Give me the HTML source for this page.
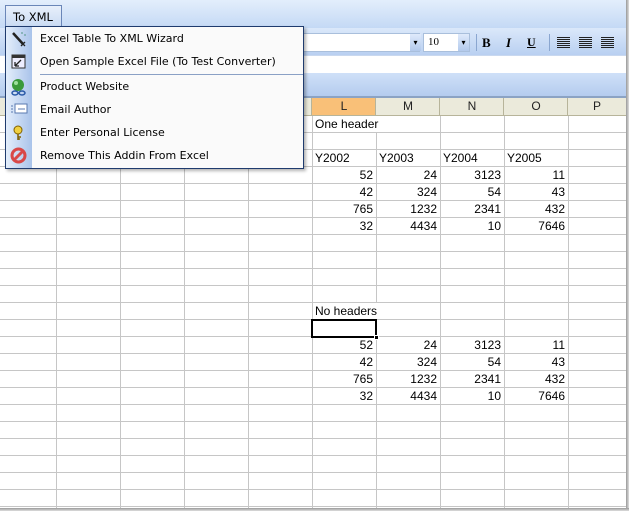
<!DOCTYPE html>
<html><head><style>
*{margin:0;padding:0;box-sizing:border-box}
body{width:634px;height:517px;position:relative;overflow:hidden;background:#fff;font-family:"Liberation Sans",Arial,sans-serif}
.a{position:absolute}
.grid{left:0;top:116px;width:626px;height:392px;
background:repeating-linear-gradient(to bottom,transparent 0 16px,#c6c6c6 16px 17px),repeating-linear-gradient(to right,transparent 0 63px,#c6c6c6 63px 64px);
background-position:0 0,-7px 0}
.t{position:absolute;font-size:12px;color:#000;line-height:17px;height:17px}
.r{text-align:right;width:60px}
.mi{position:absolute;left:40px;font-size:12px;color:#000;font-family:"DejaVu Sans","Liberation Sans",sans-serif;font-size:11px}
</style></head><body>
<!-- top band -->
<div class="a" style="left:0;top:0;width:628px;height:28px;background:linear-gradient(#e3eefc,#c4d9f5)"></div>
<div class="a" style="left:5px;top:5px;width:57px;height:22px;background:linear-gradient(#e8f0fb,#c9dbf3);border:1px solid #6a86b8;border-bottom:none;font-size:12px;padding:4px 0 0 7px;font-family:'DejaVu Sans',sans-serif;font-size:11.5px">To XML</div>
<!-- toolbar -->
<div class="a" style="left:0;top:28px;width:628px;height:27px;background:linear-gradient(#dbe8fa,#b9d0f1)"></div>
<div class="a" style="left:300px;top:33px;width:120px;height:19px;background:#fff;border:1px solid #a9bfdc"></div>
<div class="a" style="left:410px;top:34px;width:11px;height:17px;background:linear-gradient(#dfeafb,#b2c9ec);font-size:8px;text-align:center;line-height:17px">▾</div>
<div class="a" style="left:423px;top:33px;width:47px;height:19px;background:#fff;border:1px solid #a9bfdc;font-family:'Liberation Serif',serif;font-size:11px;padding:2px 4px">10</div>
<div class="a" style="left:458px;top:34px;width:11px;height:17px;background:linear-gradient(#dfeafb,#b2c9ec);font-size:8px;text-align:center;line-height:17px">▾</div>
<div class="a" style="left:476px;top:34px;width:1px;height:17px;background:#8aa6d0"></div>
<div class="a" style="left:482px;top:35px;font:bold 13px 'Liberation Serif',serif">B</div>
<div class="a" style="left:506px;top:35px;font:italic bold 13px 'Liberation Serif',serif">I</div>
<div class="a" style="left:527px;top:35px;font:bold 12px 'Liberation Serif',serif;text-decoration:underline">U</div>
<div class="a" style="left:549px;top:34px;width:1px;height:17px;background:#8aa6d0"></div>
<div class="a" style="left:557px;top:37px;width:13px;height:11px;background:repeating-linear-gradient(#222 0 1px,transparent 1px 2px)"></div>
<div class="a" style="left:579px;top:37px;width:13px;height:11px;background:repeating-linear-gradient(#222 0 1px,transparent 1px 2px)"></div>
<div class="a" style="left:601px;top:37px;width:13px;height:11px;background:repeating-linear-gradient(#222 0 1px,transparent 1px 2px)"></div>
<!-- formula bar -->
<div class="a" style="left:0;top:55px;width:628px;height:18px;background:#fff;border-top:1px solid #c9d8ef"></div>
<div class="a" style="left:0;top:73px;width:628px;height:24px;background:linear-gradient(#cfe0f8,#b3cbee)"></div>
<div class="a" style="left:0;top:96px;width:628px;height:2px;background:#8ba3c4"></div>
<!-- header row -->
<div class="a" style="left:0;top:98px;width:626px;height:18px;background:#ebeadb;border-bottom:1px solid #b7b49a"></div>
<div class="a" style="left:312px;top:98px;width:64px;height:18px;background:#f9c078;border-bottom:1px solid #b7b49a"></div>
<div class="t" style="top:98px;left:312px;width:64px;text-align:center;color:#222">L</div>
<div class="t" style="top:98px;left:376px;width:64px;text-align:center;color:#222">M</div>
<div class="t" style="top:98px;left:440px;width:64px;text-align:center;color:#222">N</div>
<div class="t" style="top:98px;left:504px;width:64px;text-align:center;color:#222">O</div>
<div class="t" style="top:98px;left:568px;width:58px;text-align:center;color:#222">P</div>
<div class="a" style="left:375px;top:98px;width:1px;height:18px;background:#b7b49a"></div>
<div class="a" style="left:439px;top:98px;width:1px;height:18px;background:#b7b49a"></div>
<div class="a" style="left:503px;top:98px;width:1px;height:18px;background:#b7b49a"></div>
<div class="a" style="left:567px;top:98px;width:1px;height:18px;background:#b7b49a"></div>
<div class="a" style="left:311px;top:98px;width:1px;height:18px;background:#b7b49a"></div>
<!-- grid -->
<div class="a grid"></div>
<div class="a" style="left:626px;top:0;width:3px;height:511px;background:linear-gradient(to right,#999,#ddd)"></div>
<div class="a" style="left:0;top:508px;width:629px;height:3px;background:linear-gradient(#999,#ddd)"></div>
<!-- white overlays for text cells spanning -->
<div class="a" style="left:313px;top:116px;width:126px;height:16px;background:#fff"></div>
<div class="a" style="left:313px;top:303px;width:126px;height:16px;background:#fff"></div>
<div class="t" style="left:315px;top:116px">One header</div>
<div class="t" style="left:315px;top:150px">Y2002</div>
<div class="t" style="left:379px;top:150px">Y2003</div>
<div class="t" style="left:443px;top:150px">Y2004</div>
<div class="t" style="left:507px;top:150px">Y2005</div>
<div class="t r" style="left:313px;top:167px">52</div><div class="t r" style="left:377px;top:167px">24</div><div class="t r" style="left:441px;top:167px">3123</div><div class="t r" style="left:505px;top:167px">11</div>
<div class="t r" style="left:313px;top:184px">42</div><div class="t r" style="left:377px;top:184px">324</div><div class="t r" style="left:441px;top:184px">54</div><div class="t r" style="left:505px;top:184px">43</div>
<div class="t r" style="left:313px;top:201px">765</div><div class="t r" style="left:377px;top:201px">1232</div><div class="t r" style="left:441px;top:201px">2341</div><div class="t r" style="left:505px;top:201px">432</div>
<div class="t r" style="left:313px;top:218px">32</div><div class="t r" style="left:377px;top:218px">4434</div><div class="t r" style="left:441px;top:218px">10</div><div class="t r" style="left:505px;top:218px">7646</div>
<div class="t" style="left:315px;top:303px">No headers</div>
<div class="a" style="left:311px;top:319px;width:66px;height:19px;border:2px solid #000"></div>
<div class="a" style="left:374px;top:335px;width:5px;height:5px;background:#000;border:1px solid #fff"></div>
<div class="t r" style="left:313px;top:337px">52</div><div class="t r" style="left:377px;top:337px">24</div><div class="t r" style="left:441px;top:337px">3123</div><div class="t r" style="left:505px;top:337px">11</div>
<div class="t r" style="left:313px;top:354px">42</div><div class="t r" style="left:377px;top:354px">324</div><div class="t r" style="left:441px;top:354px">54</div><div class="t r" style="left:505px;top:354px">43</div>
<div class="t r" style="left:313px;top:371px">765</div><div class="t r" style="left:377px;top:371px">1232</div><div class="t r" style="left:441px;top:371px">2341</div><div class="t r" style="left:505px;top:371px">432</div>
<div class="t r" style="left:313px;top:388px">32</div><div class="t r" style="left:377px;top:388px">4434</div><div class="t r" style="left:441px;top:388px">10</div><div class="t r" style="left:505px;top:388px">7646</div>
<!-- menu -->
<div class="a" style="left:5px;top:26px;width:299px;height:143px;background:#fafafa;border:1px solid #1f3b6e;box-shadow:2px 2px 3px rgba(0,0,0,.3)"></div>
<div class="a" style="left:6px;top:27px;width:26px;height:141px;background:linear-gradient(to right,#e4eefb,#a9c3ea)"></div>
<div class="a" style="left:40px;top:74px;width:263px;height:1px;background:#8aa0c5"></div>
<div class="mi" style="top:32px">Excel Table To XML Wizard</div>
<div class="mi" style="top:55px">Open Sample Excel File (To Test Converter)</div>
<div class="mi" style="top:80px">Product Website</div>
<div class="mi" style="top:103px">Email Author</div>
<div class="mi" style="top:126px">Enter Personal License</div>
<div class="mi" style="top:149px">Remove This Addin From Excel</div>
<!-- icons -->
<svg class="a" style="left:10px;top:30px" width="18" height="18"><path d="M3 3 L13 14" stroke="#222" stroke-width="2.5"/><path d="M11 12 l4 4 M15 12 l-4 4" stroke="#222" stroke-width="1.3"/><circle cx="12" cy="3" r="1" fill="#7aa"/><circle cx="15" cy="5" r="1" fill="#7aa"/></svg>
<svg class="a" style="left:11px;top:54px" width="15" height="15"><rect x="1" y="1" width="13" height="13" fill="#eef" stroke="#333"/><rect x="1" y="1" width="13" height="3" fill="#333"/><path d="M4 12 L10 6 M4 12 h4 M4 12 v-4" stroke="#222" stroke-width="1.3" fill="none"/></svg>
<svg class="a" style="left:10px;top:78px" width="18" height="18"><circle cx="8" cy="7" r="6" fill="#3a9a3a"/><circle cx="6" cy="5" r="2" fill="#9ee09e"/><ellipse cx="5" cy="15" rx="3" ry="2" fill="none" stroke="#2a5aa8" stroke-width="1.5"/><ellipse cx="12" cy="15" rx="3" ry="2" fill="none" stroke="#2a5aa8" stroke-width="1.5"/></svg>
<svg class="a" style="left:10px;top:103px" width="18" height="12"><rect x="5" y="1" width="12" height="9" fill="#fff" stroke="#5a7ab0"/><path d="M8 6 h7" stroke="#5a7ab0"/><path d="M1 3h2M1 6h2M1 9h2" stroke="#5a7ab0"/></svg>
<svg class="a" style="left:12px;top:125px" width="12" height="16"><circle cx="6" cy="5" r="4" fill="#f0d040" stroke="#806000"/><path d="M6 9 v6 M6 12 h3 M6 14 h2" stroke="#806000" stroke-width="1.5"/></svg>
<svg class="a" style="left:10px;top:147px" width="17" height="17"><circle cx="8.5" cy="8.5" r="6.5" fill="none" stroke="#d94848" stroke-width="3"/><path d="M4 13 L13 4" stroke="#d94848" stroke-width="3"/></svg>
</body></html>
